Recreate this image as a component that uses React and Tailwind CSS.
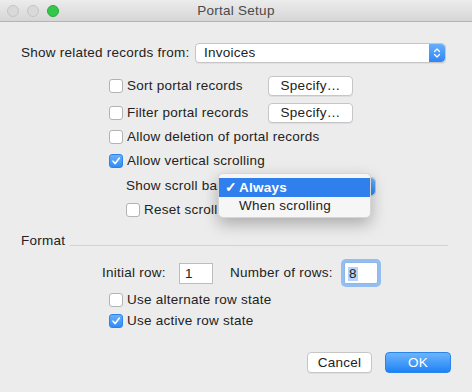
function Checkbox({ checked }) {
  return checked ? (
    <span className="w-[14px] h-[14px] rounded-[3px] bg-gradient-to-b from-[#66b0fb] to-[#2f8cf6] border border-[#2f83e8] flex items-center justify-center shrink-0">
      <svg width="10" height="10" viewBox="0 0 10 10">
        <path d="M2 5.2 L4.2 7.6 L8.2 2.2" fill="none" stroke="white" strokeWidth="1.6" strokeLinecap="round" strokeLinejoin="round" />
      </svg>
    </span>
  ) : (
    <span className="w-[14px] h-[14px] rounded-[3px] bg-white border border-[#b3b3b3] shrink-0" />
  );
}

function Stepper({ h = "h-[20px]" }) {
  return (
    <span className={`w-[16px] ${h} rounded-r-[4px] bg-gradient-to-b from-[#65aefb] to-[#2c86f5] flex items-center justify-center shrink-0`}>
      <svg width="8" height="12" viewBox="0 0 8 12">
        <path d="M1.5 4.5 L4 2 L6.5 4.5 M1.5 7.5 L4 10 L6.5 7.5" fill="none" stroke="white" strokeWidth="1.3" strokeLinecap="round" strokeLinejoin="round" />
      </svg>
    </span>
  );
}

function PushButton({ children, w }) {
  return (
    <button className={`${w} h-[20px] rounded-[4px] bg-white border border-[#c6c6c6] shadow-[0_1px_0_rgba(0,0,0,0.06)] text-[13.5px] tracking-[0.25px] text-[#222] flex items-center justify-center`}>
      {children}
    </button>
  );
}

export default function App() {
  return (
    <div className="w-[472px] h-[392px] bg-[#ececec] text-[13.5px] tracking-[0.25px] text-[#222] font-['Helvetica_Neue','Liberation_Sans',Arial,sans-serif] leading-none overflow-hidden">

      {/* Title bar */}
      <div className="relative h-[22px] bg-gradient-to-b from-[#ececec] to-[#d6d6d6] border-b border-[#b4b4b4] flex items-center justify-center">
        <div className="absolute left-[7px] top-[5px] flex gap-[8px]">
          <span className="w-[12px] h-[12px] rounded-full bg-[#d9d9d9] border border-[#c4c4c4]" />
          <span className="w-[12px] h-[12px] rounded-full bg-[#d9d9d9] border border-[#c4c4c4]" />
          <span className="w-[12px] h-[12px] rounded-full bg-[#34c84a] border border-[#2ca83c]" />
        </div>
        <span className="text-[#4a4a4a]">Portal Setup</span>
      </div>

      <div className="relative pt-[21px]">
        {/* Show related records */}
        <div className="h-[20px] flex items-center pl-[21px]">
          <span className="w-[174px] whitespace-nowrap">Show related records from:</span>
          <div className="w-[251px] h-[20px] flex rounded-[4px] border border-[#c6c6c6] bg-white shadow-[0_1px_0_rgba(0,0,0,0.05)] overflow-hidden">
            <span className="flex-1 flex items-center pl-[8px]">Invoices</span>
            <Stepper h="h-[18px]" />
          </div>
        </div>

        {/* Sort */}
        <div className="mt-[13px] h-[20px] flex items-center pl-[109px]">
          <Checkbox />
          <span className="ml-[4px] w-[141px]">Sort portal records</span>
          <PushButton w="w-[85px]">Specify…</PushButton>
        </div>

        {/* Filter */}
        <div className="mt-[7px] h-[20px] flex items-center pl-[109px]">
          <Checkbox />
          <span className="ml-[4px] w-[141px]">Filter portal records</span>
          <PushButton w="w-[85px]">Specify…</PushButton>
        </div>

        <div className="mt-[4px] h-[20px] flex items-center pl-[109px]">
          <Checkbox />
          <span className="ml-[4px]">Allow deletion of portal records</span>
        </div>

        <div className="mt-[4px] h-[20px] flex items-center pl-[109px]">
          <Checkbox checked />
          <span className="ml-[4px]">Allow vertical scrolling</span>
        </div>

        {/* Show scroll bars (label clipped under the open menu) */}
        <div className="mt-[5px] h-[20px] flex items-center pl-[126px]">
          <span className="w-[92px] overflow-hidden whitespace-nowrap">Show scroll bars:</span>
          <div className="w-[158px] h-[19px] flex rounded-[4px] border border-[#c6c6c6] bg-white overflow-hidden">
            <span className="flex-1" />
            <Stepper h="h-[17px]" />
          </div>
        </div>

        <div className="mt-[4px] h-[20px] flex items-center pl-[126px]">
          <Checkbox />
          <span className="ml-[4px] w-[74px] overflow-hidden whitespace-nowrap">Reset scroll bar</span>
        </div>

        {/* Popup menu */}
        <div className="absolute left-[218px] top-[151px] w-[153px] h-[45px] rounded-[5px] bg-[#f6f6f6] border border-[#d6d6d6] shadow-[0_6px_16px_rgba(0,0,0,0.28)] pt-[4px]">
          <div className="h-[19px] bg-[#2f7fec] text-white font-bold flex items-center pl-[6px]">
            <span className="w-[14px]">✓</span>
            <span>Always</span>
          </div>
          <div className="h-[18px] flex items-center pl-[20px] text-[#222]">When scrolling</div>
        </div>

        {/* Format */}
        <div className="mt-[11px] h-[20px] flex items-center pl-[21px] pr-[24px]">
          <span>Format</span>
          <span className="flex-1 ml-[5px] mt-[8px] h-px bg-[#d2d2d2]" />
        </div>

        <div className="mt-[11px] h-[22px] flex items-center pl-[102px]">
          <span className="w-[77px]">Initial row:</span>
          <div className="w-[34px] h-[21px] bg-white border border-[#bdbdbd] flex items-center pl-[5px] pt-[2px]">1</div>
          <span className="ml-[17px] w-[114px]">Number of rows:</span>
          <div className="w-[34px] h-[22px] bg-white border border-[#8fb6e8] ring-[3px] ring-[#94bdf0] rounded-[2px] flex items-center pl-[3px] pt-[2px]">
            <span className="bg-[#b3d4fc] px-px">8</span>
          </div>
        </div>

        <div className="mt-[6px] h-[20px] flex items-center pl-[109px]">
          <Checkbox />
          <span className="ml-[4px]">Use alternate row state</span>
        </div>

        <div className="mt-px h-[20px] flex items-center pl-[109px]">
          <Checkbox checked />
          <span className="ml-[4px]">Use active row state</span>
        </div>

        {/* Buttons */}
        <div className="mt-[21px] h-[21px] flex justify-end pr-[21px] gap-[13px]">
          <PushButton w="w-[65px] h-[21px]">Cancel</PushButton>
          <button className="w-[66px] h-[21px] rounded-[4px] bg-gradient-to-b from-[#6ab4fb] to-[#1a82f7] border border-[#2b84ec] text-white flex items-center justify-center">
            OK
          </button>
        </div>
      </div>
    </div>
  );
}
